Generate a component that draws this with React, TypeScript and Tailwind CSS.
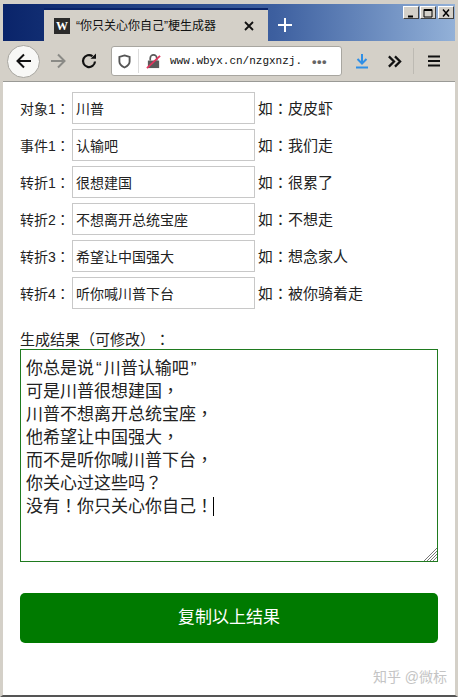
const rows = [
  ["对象1：", "川普", "如：皮皮虾"],
  ["事件1：", "认输吧", "如：我们走"],
  ["转折1：", "很想建国", "如：很累了"],
  ["转折2：", "不想离开总统宝座", "如：不想走"],
  ["转折3：", "希望让中国强大", "如：想念家人"],
  ["转折4：", "听你喊川普下台", "如：被你骑着走"],
];

const lines = [
  "可是川普很想建国，",
  "川普不想离开总统宝座，",
  "他希望让中国强大，",
  "而不是听你喊川普下台，",
  "你关心过这些吗？",
];

function WinButton({ children }: { children: React.ReactNode }) {
  return (
    <div className="flex h-[13px] w-[16px] items-center justify-center border border-t-white border-l-white border-r-[#404040] border-b-[#404040] bg-[#d4d0c8]">
      <svg viewBox="0 0 12 10" className="h-[10px] w-[12px]" fill="none" stroke="#000">
        {children}
      </svg>
    </div>
  );
}

export default function App() {
  return (
    <div className="flex h-[697px] w-[458px] flex-col overflow-hidden border-[3px] border-t-[4px] border-b-[2px] border-[#d4d0c8] border-b-[#555] bg-white font-['Liberation_Sans','Noto_Sans_CJK_TC',sans-serif] text-[#222] [text-spacing-trim:space-all]">
      {/* Title bar with tab */}
      <div className="flex h-[37px] shrink-0 bg-gradient-to-r from-[#0a246a] via-[#3d5f9f] via-60% to-[#93b1d8]">
        <div className="w-[41px] shrink-0" />
        <div className="mt-[4px] flex w-[224px] shrink-0 items-center border-t-2 border-t-[#0a246a] bg-[#d4d0c8] pl-[10px] pr-[13px]">
          <div className="flex h-[16px] w-[16px] shrink-0 items-center justify-center bg-[#2b2b2b] font-['Liberation_Serif',serif] text-[12px] font-bold leading-none text-white">
            W
          </div>
          <span className="ml-[6px] flex-1 whitespace-nowrap text-[12px] leading-none text-[#111]">
            “你只关心你自己”梗生成器
          </span>
          <svg viewBox="0 0 12 12" className="h-[12px] w-[12px] shrink-0" fill="none" stroke="#111" strokeWidth="1.8">
            <path d="M2 2l8 8M10 2l-8 8" />
          </svg>
        </div>
        <div className="ml-[9px] mt-[4px] flex items-center">
          <svg viewBox="0 0 16 16" className="h-[16px] w-[16px]" fill="none" stroke="#fff" strokeWidth="2">
            <path d="M8 1v14M1 8h14" />
          </svg>
        </div>
        <div className="ml-auto mr-[1px] mt-[2px] flex gap-0">
          <WinButton>
            <path d="M3 8.500h5" strokeWidth="2" />
          </WinButton>
          <div className="w-[1px]" />
          <WinButton>
            <path d="M2 1.500h8v7.500h-8z M2 2.500h8" />
          </WinButton>
          <div className="w-[2px]" />
          <WinButton>
            <path d="M3 1.500l6 7M9 1.500l-6 7" strokeWidth="1.500" />
          </WinButton>
        </div>
      </div>

      {/* Toolbar */}
      <div className="flex h-[41px] shrink-0 items-center border-b border-b-[#9a9a96] bg-[#d4d0c8] pl-[4px]">
        <div className="flex h-[33px] w-[33px] shrink-0 items-center justify-center rounded-full border border-[#a8a6a0] bg-[#f8f8f6]">
          <svg viewBox="0 0 18 18" className="h-[18px] w-[18px]" fill="none" stroke="#111" strokeWidth="2">
            <path d="M16 9H2.500M9 2.500L2.500 9 9 15.500" />
          </svg>
        </div>
        <svg viewBox="0 0 18 18" className="ml-[9px] h-[18px] w-[18px]" fill="none" stroke="#8a8a86" strokeWidth="2">
          <path d="M2 9h13.500M9 2.500L15.500 9 9 15.500" />
        </svg>
        <svg viewBox="0 0 18 18" className="ml-[13px] h-[18px] w-[18px]" fill="none" stroke="#111" strokeWidth="2.200">
          <path d="M15 9.500A6 6 0 1 1 12.500 4.200" />
          <path d="M10.500 6.800h5.500V1.500z" fill="#111" stroke="none" />
        </svg>
        <div className="ml-[13px] flex h-[30px] w-[231px] shrink-0 items-center rounded-[3px] border border-[#a8a6a0] bg-white">
          <svg viewBox="0 0 14 16" className="ml-[6px] h-[15px] w-[13px] shrink-0" fill="none" stroke="#555" strokeWidth="2">
            <path d="M7 1.500l5.500 1.500v5c0 3-2.500 5-5.500 6.500-3-1.500-5.500-3.500-5.500-6.500v-5z" />
          </svg>
          <div className="ml-[7px] h-[24px] w-[1px] shrink-0 bg-[#dcdcdc]" />
          <svg viewBox="0 0 16 16" className="ml-[7px] h-[15px] w-[15px] shrink-0">
            <rect x="2" y="7" width="12" height="8" fill="#5a5a5a" />
            <path d="M4.500 7V4.500a3.500 3.500 0 0 1 7 0V7" fill="none" stroke="#5a5a5a" strokeWidth="1.800" />
            <path d="M1 15L15 2" stroke="#e0365f" strokeWidth="2" />
          </svg>
          <span className="ml-[9px] w-[134px] shrink-0 whitespace-nowrap font-['Liberation_Mono',monospace] text-[11px] leading-none text-[#111]">
            www.wbyx.cn/nzgxnzj.
          </span>
          <span className="ml-[8px] whitespace-nowrap text-[13px] font-bold leading-none tracking-[0.500px] text-[#666]">•••</span>
        </div>
        <svg viewBox="0 0 16 16" className="ml-[12px] h-[16px] w-[16px] shrink-0" fill="none" stroke="#2f8fe6" strokeWidth="2">
          <path d="M8 1v9M3.500 6L8 10.500 12.500 6M2 14.500h12" />
        </svg>
        <svg viewBox="0 0 16 16" className="ml-[17px] h-[15px] w-[15px] shrink-0" fill="none" stroke="#111" strokeWidth="2.400">
          <path d="M2 2.500L7.500 8 2 13.500M8.500 2.500L14 8l-5.500 5.500" />
        </svg>
        <div className="ml-[11px] h-[26px] w-[1px] shrink-0 bg-[#bdbab3]" />
        <svg viewBox="0 0 14 14" className="ml-[13px] h-[14px] w-[14px] shrink-0" fill="none" stroke="#111" strokeWidth="2">
          <path d="M1 2.500h12M1 7h12M1 11.500h12" />
        </svg>
      </div>

      {/* Page */}
      <div className="relative flex flex-1 flex-col pl-[17px] pr-[18px] pt-[10px]">
        <div className="flex flex-col gap-[5px]">
          {rows.map(([label, value, hint]) => (
            <div key={label} className="flex h-[32px] items-center">
              <span className="w-[52px] pt-[2px] text-[14px] leading-none">{label}</span>
              <div className="flex h-[32px] w-[183px] items-center border border-[#c8c8c8] pl-[3px] pt-[1px] text-[14px] leading-none">
                {value}
              </div>
              <span className="ml-[3px] text-[15px] leading-none">{hint}</span>
            </div>
          ))}
        </div>

        <div className="mt-[22px] text-[15px] leading-[18px]">生成结果（可修改）：</div>
        <div className="relative h-[213px] w-[418px] border border-[#1f7a1f] px-[5px] pt-[7px] text-[17px] leading-[23px] text-[#222]">
          <div className="whitespace-nowrap">
            你总是说<span className="mx-[2px]">“</span>川普认输吧<span className="mx-[2px]">”</span>
          </div>
          {lines.map((line) => (
            <div key={line}>{line}</div>
          ))}
          <div className="flex items-center">
            没有！你只关心你自己！
            <span className="h-[19px] w-[1px] bg-black" />
          </div>
          <svg viewBox="0 0 14 14" className="absolute bottom-0 right-0 h-[14px] w-[14px]" stroke="#777" fill="none">
            <path d="M1 14L14 1M4 14L14 4M7 14l7-7M10 14l4-4" />
          </svg>
        </div>

        <button className="mt-[31px] h-[50px] w-[418px] rounded-[5px] bg-[#007a00] text-[17px] text-white">
          复制以上结果
        </button>

        <div className="absolute bottom-[11px] right-[8px] whitespace-nowrap text-[14px] leading-none text-[#c4c4c4]">
          知乎 @微标
        </div>
      </div>
    </div>
  );
}
